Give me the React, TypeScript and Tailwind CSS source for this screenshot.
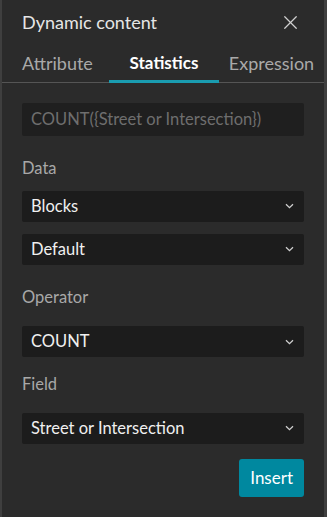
import { X } from 'lucide-react';

function Chevron() {
  return (
    <svg width="9" height="6" viewBox="0 0 9 6" fill="none" className="shrink-0">
      <path d="M1 1.2L4.5 4.6L8 1.2" stroke="#cfcfcf" strokeWidth="1.3" />
    </svg>
  );
}

function Select({ value }: { value: string }) {
  return (
    <div className="flex items-center justify-between h-[31px] pl-[9px] pr-[10px] bg-[#1c1c1c] rounded-[2px] text-[16.5px] text-[#f0f0f0]">
      <span>{value}</span>
      <Chevron />
    </div>
  );
}

function Label({ text }: { text: string }) {
  return <div className="text-[16.5px] text-[#a8a8a8] leading-none">{text}</div>;
}

export default function App() {
  const tabs = ['Attribute', 'Statistics', 'Expression'];
  const activo = 'Statistics';

  return (
    <div
      className="w-[327px] h-[517px] bg-[#2b2b2b] border-l-2 border-r-[3px] border-[#3f3f3f] flex flex-col"
      style={{ fontFamily: 'Lato, "Noto Sans", sans-serif' }}
    >
      <div className="flex items-center justify-between h-[44px] pl-[20px] pr-[22px]">
        <span className="text-[18px] text-[#e6e6e6]">Dynamic content</span>
        <X size={23} strokeWidth={1.3} color="#d0d0d0" />
      </div>

      <div className="flex h-[39px] border-b border-[#555]">
        {tabs.map((tab) => (
          <div
            key={tab}
            className={`relative flex items-center ${
              tab === 'Attribute' ? 'w-[107px] justify-start pl-[20px]' : tab === 'Statistics' ? 'w-[110px] justify-center' : 'flex-1 justify-center'
            } ${tab === activo ? 'text-white font-bold text-[17px]' : 'text-[#a9a9a9] text-[18px]'}`}
          >
            {tab}
            {tab === activo && (
              <div className="absolute left-0 right-0 -bottom-px h-[3px] bg-[#1a9cb0]" />
            )}
          </div>
        ))}
      </div>

      <div className="flex flex-col px-[20px] pt-[20px]">
        <div className="h-[33px] bg-[#1f1f1f] rounded-[2px] flex items-center px-[9px] text-[16.5px] text-[#6e6e6e]">
          COUNT({'{'}Street or Intersection{'}'})
        </div>

        <div className="mt-[24px]"><Label text="Data" /></div>
        <div className="mt-[14px]"><Select value="Blocks" /></div>
        <div className="mt-[12px]"><Select value="Default" /></div>

        <div className="mt-[24px]"><Label text="Operator" /></div>
        <div className="mt-[21px]"><Select value="COUNT" /></div>

        <div className="mt-[19px]"><Label text="Field" /></div>
        <div className="mt-[20px]"><Select value="Street or Intersection" /></div>

        <div className="flex justify-end mt-[15px]">
          <button className="h-[38px] px-[11px] bg-[#00889f] rounded-[3px] text-[17px] text-white">
            Insert
          </button>
        </div>
      </div>
    </div>
  );
}
